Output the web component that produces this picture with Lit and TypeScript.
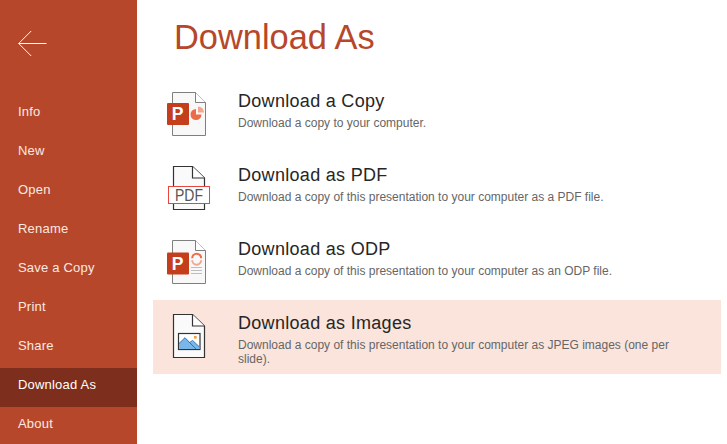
import { LitElement, html, css, svg } from "lit";
import { customElement } from "lit/decorators.js";

const pSquare = (y: number) => svg`
  <rect x="2" y="${y}" width="22" height="22" rx="1" fill="#c43e1c"/>
  <text x="12.5" y="${y + 17}" text-anchor="middle" class="p">P</text>`;

const pptPage = svg`
  <path d="M7.5 .5H30.5L40.5 10.5V43.5H7.5Z" fill="#f8f8f8" stroke="#7f7f7f"/>
  <path d="M30.5 .5V10.5H40.5" fill="#fff" stroke="#7f7f7f"/>`;

const darkPage = svg`
  <path d="M8.5 .5H27.5L39.5 12V43.5H8.5Z" fill="#fafafa" stroke="#333" stroke-width="1.2"/>
  <path d="M27.5 .5V12H39.5" fill="#fff" stroke="#333" stroke-width="1.2"/>`;

const pptIcon = svg`
  <svg width="52" height="48" viewBox="0 0 52 48">
    ${pptPage}
    ${pSquare(11)}
    <path d="M31 17V22.5H36.5A5.5 5.5 0 1 1 31 17Z" fill="#ed6c47"/>
    <path d="M33 14.5A6 6 0 0 1 39 20.5H33Z" fill="#f5a48e"/>
  </svg>`;

const pdfIcon = svg`
  <svg width="52" height="48" viewBox="0 0 52 48">
    ${darkPage}
    <rect x="3.5" y="20.5" width="41" height="17" fill="#fff" stroke="#e8453c"/>
    <text x="10" y="35" textLength="28" lengthAdjust="spacingAndGlyphs" class="pdf">PDF</text>
  </svg>`;

const odpIcon = svg`
  <svg width="52" height="48" viewBox="0 0 52 48">
    ${pptPage}
    ${pSquare(12.5)}
    <path d="M27.2 18.2A4.5 4.5 0 0 1 36.2 18.2" fill="none" stroke="#ed6c47" stroke-width="2"/>
    <path d="M36.2 20.2A4.5 4.5 0 0 1 27.2 20.2" fill="none" stroke="#f5a48e" stroke-width="2"/>
    <path d="M26 27.5H37M26 30.5H37M26 33.5H37" stroke="#bdbdbd"/>
  </svg>`;

const imgIcon = svg`
  <svg width="52" height="48" viewBox="0 0 52 48">
    ${darkPage}
    <rect x="13.5" y="19.5" width="21.5" height="16" fill="#fff" stroke="#333" stroke-width="1.2"/>
    <path d="M14 35V29.5L20 23.7L25 28.5L27.7 27L34.5 33V35Z" fill="#7ab6e8"/>
    <path d="M14 29.5L20 23.7L26.5 30.5M24.5 28.5L27.7 26.5L34.5 33M25.5 29.5L31 35" fill="none" stroke="#2e75b6"/>
    <rect x="29" y="22" width="2.6" height="2.6" fill="#f29b3b"/>
  </svg>`;

const menu = ["Info", "New", "Open", "Rename", "Save a Copy", "Print", "Share", "Download As", "About"];

const rows = [
  { icon: pptIcon, title: "Download a Copy", text: "Download a copy to your computer." },
  { icon: pdfIcon, title: "Download as PDF", text: "Download a copy of this presentation to your computer as a PDF file." },
  { icon: odpIcon, title: "Download as ODP", text: "Download a copy of this presentation to your computer as an ODP file." },
  { icon: imgIcon, title: "Download as Images", text: "Download a copy of this presentation to your computer as JPEG images (one per slide).", active: true },
];

@customElement("app-root")
export class AppRoot extends LitElement {
  static styles = css`
    :host {
      display: flex;
      width: 727px;
      height: 444px;
      overflow: hidden;
      background: #fff;
      font-family: "Liberation Sans", Arial, sans-serif;
    }
    .side {
      width: 137px;
      flex: none;
      background: #b7472a;
      color: #fff;
    }
    .back {
      height: 95px;
      padding: 30px 0 0 18px;
      box-sizing: border-box;
    }
    .back svg {
      display: block;
    }
    .item {
      height: 39px;
      line-height: 33px;
      padding-left: 18px;
      font-size: 13px;
      color: #fbe9e3;
      letter-spacing: 0.2px;
    }
    .item.on {
      background: #7e2e1c;
      color: #fff;
    }
    .main {
      flex: 1;
      padding: 0 6px 0 16px;
    }
    h1 {
      margin: 0;
      height: 78px;
      padding: 16px 0 0 21px;
      box-sizing: border-box;
      font-size: 34.4px;
      line-height: 42px;
      font-weight: 400;
      color: #b7472a;
    }
    .row {
      display: flex;
      height: 74px;
      box-sizing: border-box;
      padding: 13px 0 0 12px;
    }
    .row.on {
      background: #fae4dc;
    }
    .icon {
      width: 73px;
      flex: none;
      margin-top: 1px;
    }
    .title {
      font-size: 18px;
      line-height: 20px;
      color: #262626;
      letter-spacing: 0.3px;
    }
    .text {
      margin-top: 5px;
      max-width: 450px;
      font-size: 12px;
      line-height: 14px;
      color: #666;
    }
    svg .p {
      font: 700 17.5px "Liberation Sans", Arial, sans-serif;
      fill: #fff;
    }
    svg .pdf {
      font: 400 17px "Liberation Sans", Arial, sans-serif;
      fill: #555;
    }
  `;

  render() {
    return html`
      <nav class="side">
        <div class="back">
          <svg width="30" height="28" viewBox="0 0 30 28">
            <path d="M28.5 13.5H.7M13.2 1L.7 13.5L13.2 26" fill="none" stroke="#fff"/>
          </svg>
        </div>
        ${menu.map((m) => html`<div class="item ${m === "Download As" ? "on" : ""}">${m}</div>`)}
      </nav>
      <section class="main">
        <h1>Download As</h1>
        ${rows.map(
          (r) => html`
            <div class="row ${r.active ? "on" : ""}">
              <div class="icon">${r.icon}</div>
              <div>
                <div class="title">${r.title}</div>
                <div class="text">${r.text}</div>
              </div>
            </div>
          `
        )}
      </section>
    `;
  }
}
